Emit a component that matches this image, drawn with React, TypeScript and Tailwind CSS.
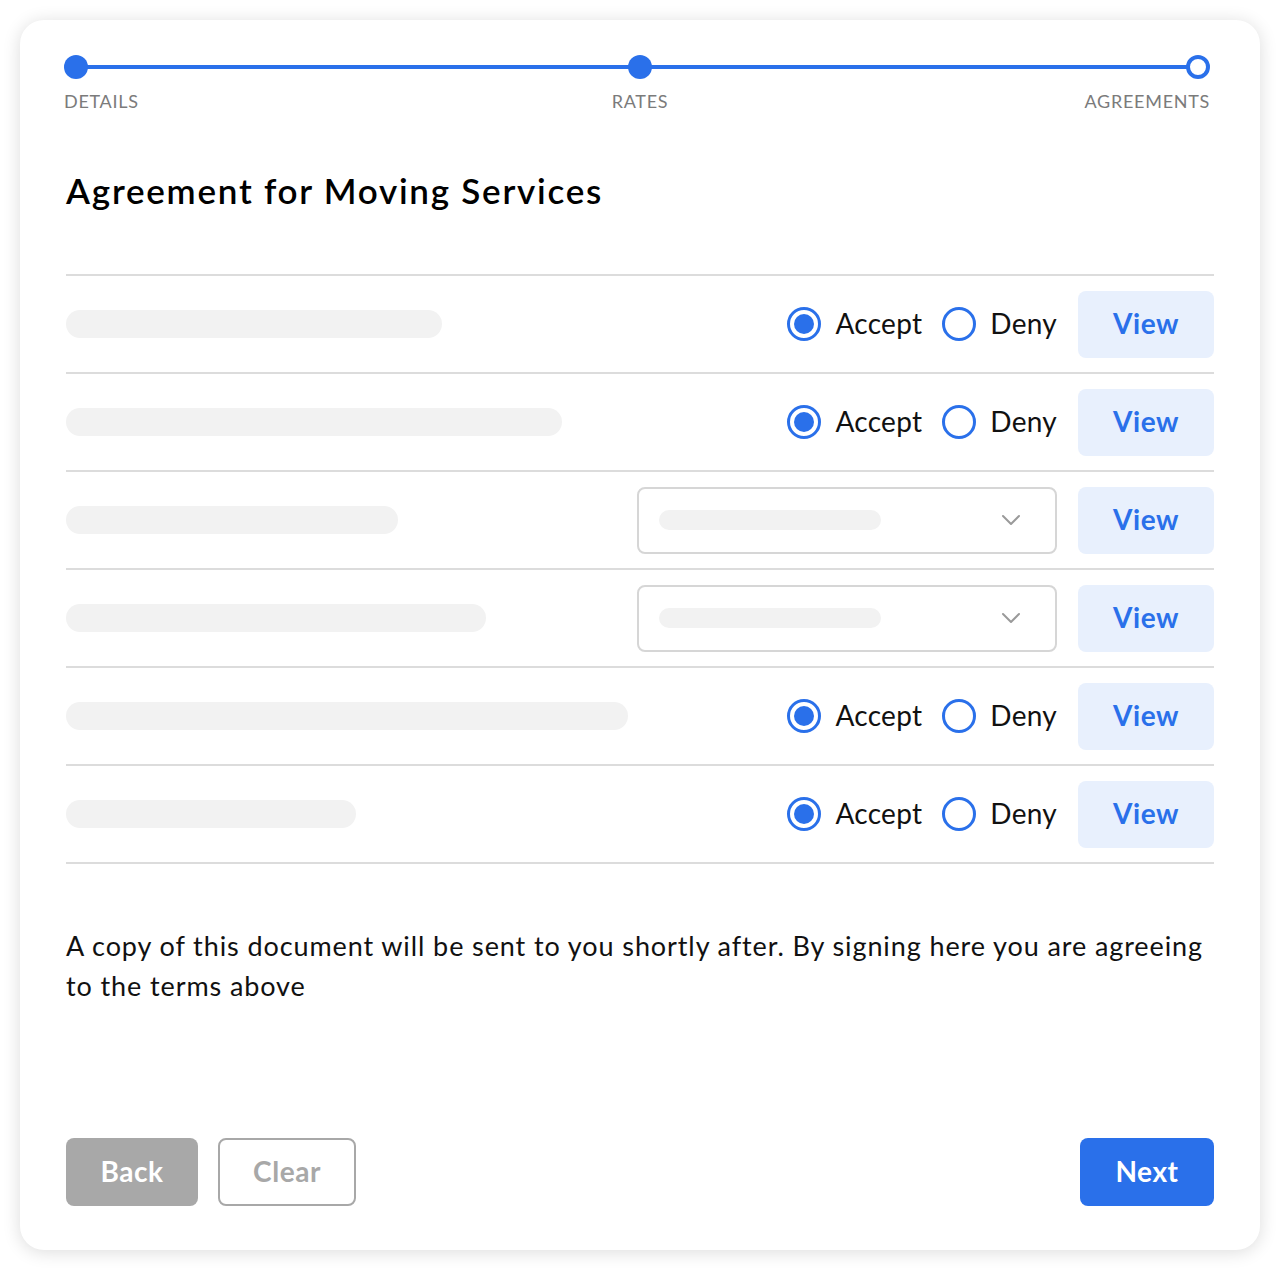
import React from 'react'

type Row = { bar: number; kind: 'radio' | 'select' }

const ROWS: Row[] = [
  { bar: 376, kind: 'radio' },
  { bar: 496, kind: 'radio' },
  { bar: 332, kind: 'select' },
  { bar: 420, kind: 'select' },
  { bar: 562, kind: 'radio' },
  { bar: 290, kind: 'radio' },
]

function Radio({ checked, label }: { checked?: boolean; label: string }) {
  return (
    <label className="flex items-center gap-[14px]">
      <span className="flex h-[34px] w-[34px] items-center justify-center rounded-full border-[3px] border-[#2a70ea]">
        {checked && <span className="h-[20px] w-[20px] rounded-full bg-[#2a70ea]" />}
      </span>
      <span className="pb-[2px] text-[28px] leading-none tracking-[0.01em] text-[#111]">{label}</span>
    </label>
  )
}

function ViewButton() {
  return (
    <button className="h-[67px] w-[136px] rounded-lg bg-[#e8f0fd] pb-[3px] text-[28px] font-bold leading-none tracking-[0.02em] text-[#2a70ea]">
      View
    </button>
  )
}

function Stepper() {
  const steps = ['DETAILS', 'RATES', 'AGREEMENTS']
  return (
    <div className="pl-[44px] pr-[50px] pt-[35px]">
      <div className="relative flex h-[24px] items-center justify-between">
        <div className="absolute left-[12px] right-[12px] top-[10px] h-[4px] bg-[#2a70ea]" />
        <span className="relative h-[24px] w-[24px] rounded-full bg-[#2a70ea]" />
        <span className="relative ml-[6px] h-[24px] w-[24px] rounded-full bg-[#2a70ea]" />
        <span className="relative h-[24px] w-[24px] rounded-full border-[4px] border-[#2a70ea] bg-white" />
      </div>
      <div className="mt-[10px] grid grid-cols-3 text-[18px] leading-[24px] tracking-[0.04em] text-[#7b7b7b]">
        <span>{steps[0]}</span>
        <span className="pl-[6px] text-center">{steps[1]}</span>
        <span className="text-right">{steps[2]}</span>
      </div>
    </div>
  )
}

export default function App() {
  return (
    <div className="min-h-[1280px] bg-white p-[20px]" style={{ fontFamily: 'Lato, "Noto Sans", sans-serif' }}>
      <div className="flex h-[1230px] flex-col rounded-[24px] bg-white shadow-[0_2px_18px_rgba(0,0,0,0.14)]">
        <Stepper />
        <div className="flex flex-1 flex-col px-[46px] pb-[44px]">
          <h1 className="mt-[57px] text-[35px] font-semibold leading-[40px] tracking-[0.05em] text-black">
            Agreement for Moving Services
          </h1>

          <div className="mt-[64px] border-t-2 border-[#dcdcdc]">
            {ROWS.map((r, i) => (
              <div key={i} className="flex h-[98px] items-center justify-between border-b-2 border-[#dcdcdc]">
                <div className="h-[28px] rounded-full bg-[#f2f2f2]" style={{ width: r.bar }} />
                <div className="flex items-center gap-[21px]">
                  {r.kind === 'radio' ? (
                    <div className="flex items-center gap-[20px]">
                      <Radio checked label="Accept" />
                      <Radio label="Deny" />
                    </div>
                  ) : (
                    <div className="flex h-[67px] w-[420px] items-center justify-between rounded-lg border-2 border-[#d6d6d6] pl-[20px] pr-[34px]">
                      <div className="h-[20px] w-[222px] rounded-full bg-[#f2f2f2]" />
                      <svg width="20" height="12" viewBox="0 0 20 12" fill="none">
                        <path d="M2 2l8 8 8-8" stroke="#9a9a9a" strokeWidth="2" strokeLinecap="round" strokeLinejoin="round" />
                      </svg>
                    </div>
                  )}
                  <ViewButton />
                </div>
              </div>
            ))}
          </div>

          <p className="mt-[62px] text-[27px] leading-[40px] tracking-[0.9px] text-[#111]">
            A copy of this document will be sent to you shortly after. By signing here you are agreeing to the terms above
          </p>

          <div className="mt-auto flex items-center justify-between">
            <div className="flex gap-[20px]">
              <button className="h-[68px] w-[132px] rounded-lg bg-[#a8a8a8] pb-[3px] text-[28px] font-bold leading-none tracking-[0.02em] text-white">
                Back
              </button>
              <button className="h-[68px] w-[138px] rounded-lg border-2 border-[#a8a8a8] bg-white pb-[3px] text-[28px] font-bold leading-none tracking-[0.02em] text-[#a8a8a8]">
                Clear
              </button>
            </div>
            <button className="h-[68px] w-[134px] rounded-lg bg-[#2a70ea] pb-[3px] text-[28px] font-bold leading-none tracking-[0.02em] text-white">
              Next
            </button>
          </div>
        </div>
      </div>
    </div>
  )
}
